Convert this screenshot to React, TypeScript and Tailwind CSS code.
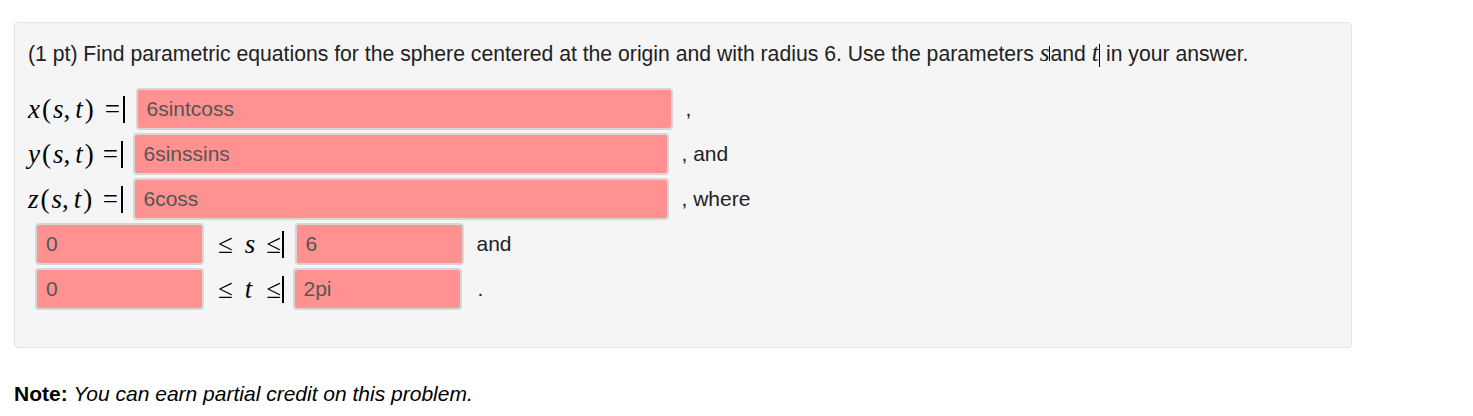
import React from "react";

const sans = { fontFamily: '"Liberation Sans", Arial, sans-serif' };
const serif = { fontFamily: '"Liberation Serif", "Times New Roman", serif' };

function Bar({ h = "h-[27px]" }: { h?: string }) {
  return <span className={`inline-block w-[1.5px] shrink-0 bg-black align-middle ${h}`} />;
}

function Answer({ value, w }: { value: string; w: string }) {
  return (
    <div
      className={`${w} h-[42px] shrink-0 flex items-center pl-[9px] rounded-[4px] border-2 border-[#d6d6d6] bg-[#ff9191] text-[#555] text-[21px]`}
    >
      {value}
    </div>
  );
}

function Fn({ name, w }: { name: string; w: string }) {
  return (
    <span className={`${w} shrink-0 flex items-baseline pr-[3px] text-[27px] leading-none text-black whitespace-nowrap`} style={serif}>
      <i className="mr-[2px]">{name}</i>
      <span>(</span>
      <i className="ml-[2px]">s</i>
      <span className="mr-[5px]">,</span>
      <i>t</i>
      <span className="ml-[2px]">)</span>
      <span className="ml-auto pl-[4px]">=</span>
    </span>
  );
}

function Range({ v }: { v: string }) {
  return (
    <span className="ml-[14px] w-[64px] shrink-0 flex items-baseline pr-[1px] text-[27px] leading-none text-black whitespace-nowrap" style={serif}>
      <span>≤</span>
      <i className="ml-[12px]">{v}</i>
      <span className="ml-auto">≤</span>
    </span>
  );
}

export default function App() {
  return (
    <div className="min-h-screen bg-white pt-[22px] pl-[14px] text-[#222]" style={sans}>
      <div className="w-[1338px] h-[326px] bg-[#f5f5f5] border border-[#e3e3e3] rounded-[4px] pl-[13px] pt-[15px]">
        <p className="text-[21.2px] leading-[30px]">
          (1 pt) Find parametric equations for the sphere centered at the origin and with radius 6. Use the
          parameters{" "}
          <span style={serif} className="text-[25px]">
            <i>s</i>
          </span>
          <span className="inline-block w-px h-[15px] bg-black align-baseline" />
          and{" "}
          <span style={serif} className="text-[25px]">
            <i>t</i>
          </span>
          <Bar h="h-[23px]" /> in your answer.
        </p>

        <div className="mt-[19px] flex flex-col gap-[3px]">
          <div className="flex items-center">
            <Fn name="x" w="w-[95px]" />
            <Bar />
            <div className="w-[11px] shrink-0" />
            <Answer value="6sintcoss" w="w-[537px]" />
            <span className="ml-[13px] text-[21px]">,</span>
          </div>
          <div className="flex items-center">
            <Fn name="y" w="w-[93px]" />
            <Bar />
            <div className="w-[10px] shrink-0" />
            <Answer value="6sinssins" w="w-[536px]" />
            <span className="ml-[13px] text-[21px]">, and</span>
          </div>
          <div className="flex items-center">
            <Fn name="z" w="w-[93px]" />
            <Bar />
            <div className="w-[10px] shrink-0" />
            <Answer value="6coss" w="w-[536px]" />
            <span className="ml-[13px] text-[21px]">, where</span>
          </div>
          <div className="flex items-center pl-[7px]">
            <Answer value="0" w="w-[169px]" />
            <Range v="s" />
            <Bar />
            <div className="w-[11px] shrink-0" />
            <Answer value="6" w="w-[169px]" />
            <span className="ml-[13px] text-[21px]">and</span>
          </div>
          <div className="flex items-center pl-[7px]">
            <Answer value="0" w="w-[169px]" />
            <Range v="t" />
            <Bar />
            <div className="w-[9px] shrink-0" />
            <Answer value="2pi" w="w-[169px]" />
            <span className="ml-[16px] text-[21px]">.</span>
          </div>
        </div>
      </div>

      <p className="mt-[30px] text-[21px] text-black">
        <b>Note:</b> <i>You can earn partial credit on this problem.</i>
      </p>
    </div>
  );
}
